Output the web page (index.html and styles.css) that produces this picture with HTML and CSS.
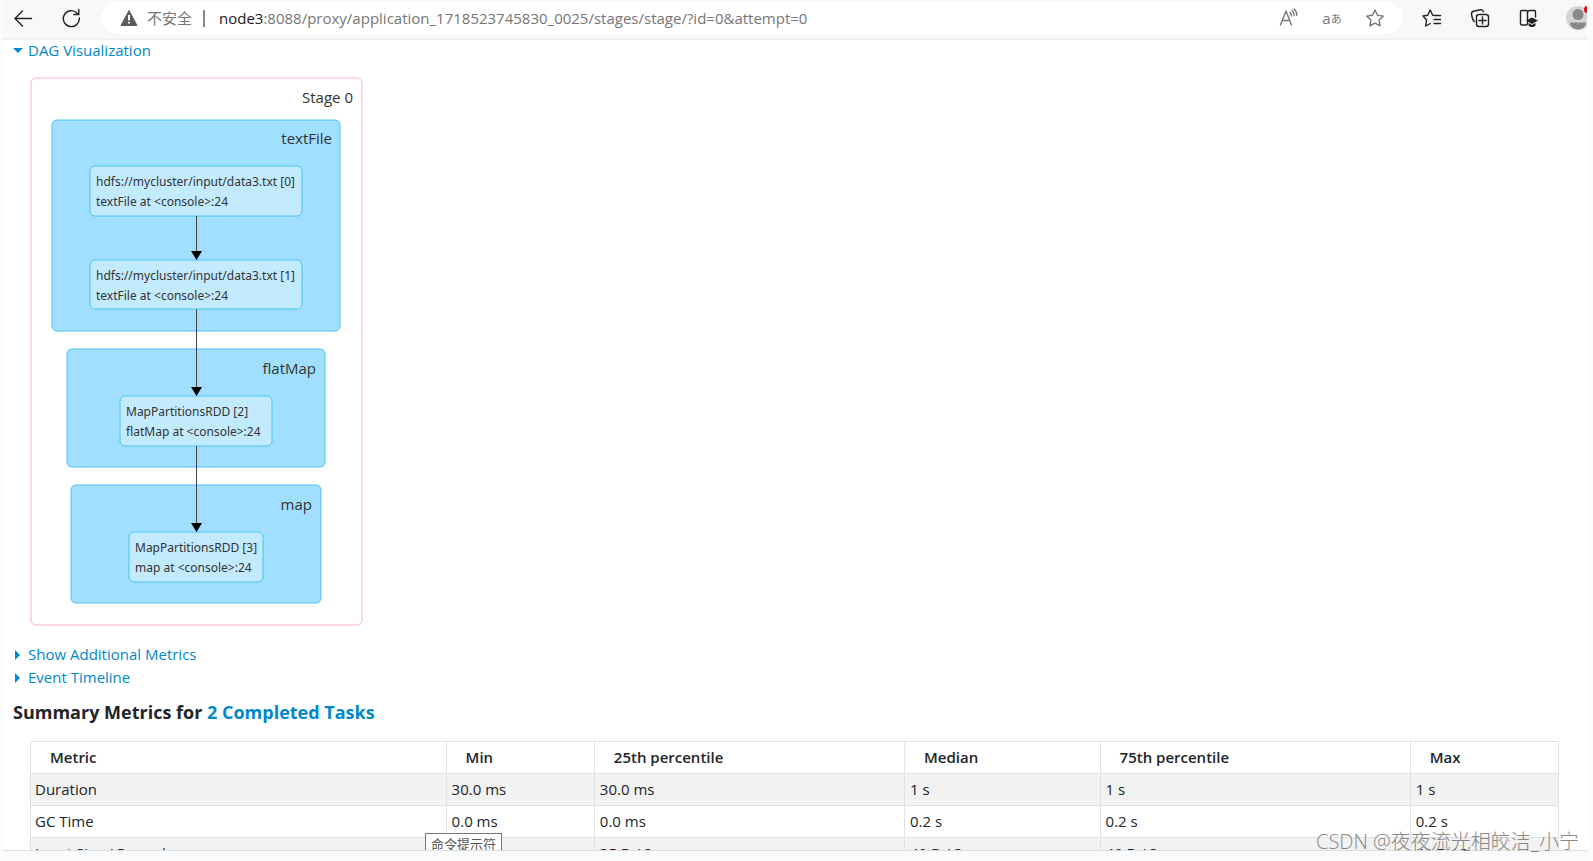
FILE: index.html
```html
<!DOCTYPE html>
<html lang="en">
<head>
  <meta charset="UTF-8" />
  <meta name="viewport" content="width=device-width, initial-scale=1" />
  <title>Details for Stage 0 (Attempt 0)</title>
  <link rel="stylesheet" href="styles.css">
</head>
<body>
  <div class="browser">

    <header class="toolbar">
      <button class="icon-btn" aria-label="Back">
        <svg width="20" height="20" viewBox="0 0 20 20"><path d="M18.500 10.500H2M9.500 3L2 10.500l7.500 7.500" /></svg>
      </button>
      <button class="icon-btn" aria-label="Refresh">
        <svg width="20" height="20" viewBox="0 0 20 20"><path d="M18.300 10a8 8 0 1 1-2.300-5L17.800 6.500M17.800 1.500v5h-5" /></svg>
      </button>

      <div class="address-bar">
        <svg class="warning" width="18" height="18" viewBox="0 0 18 18">
          <path class="solid" d="M9 1.500L17 16.500H1z" />
          <path class="mark" d="M9 6v5.500M9 13v1.500" />
        </svg>
        <span class="unsafe">不安全</span>
        <span class="divider"></span>
        <span class="url"><b>node3</b>:8088/proxy/application_1718523745830_0025/stages/stage/?id=0&amp;attempt=0</span>
        <div class="address-icons">
          <button class="icon-btn grey" aria-label="Read aloud">
            <svg width="20" height="20" viewBox="0 0 20 20"><path d="M1.500 17L7 3l5.500 14M3.500 12.500h7M11 4.500c1 .8 1.500 2 1.500 3.500M13 2.500c1.600 1.300 2.200 3 2.200 5M15 1c2 1.600 2.800 3.800 2.800 6.500" /></svg>
          </button>
          <button class="icon-btn grey translate" aria-label="Translate"><span>a</span>あ</button>
          <button class="icon-btn grey" aria-label="Add to favourites">
            <svg width="20" height="20" viewBox="0 0 20 20"><path d="M10 2l2.500 5.300 5.800.8-4.200 4 1 5.800L10 15.200 4.900 17.900l1-5.800-4.200-4 5.800-.8z" /></svg>
          </button>
        </div>
      </div>

      <div class="tools">
        <button class="icon-btn" aria-label="Favourites">
          <svg width="20" height="20" viewBox="0 0 20 20"><path d="M12.500 7.500l-1.800-.2L8.200 2 5.700 7.300 1 8l3.600 4-1 6 4.700-2.500M12.500 7.500h6M12 11.500h6.500M12 15.500h6.500" /></svg>
        </button>
        <button class="icon-btn" aria-label="Collections">
          <svg width="20" height="20" viewBox="0 0 20 20"><rect x="6.500" y="6.500" width="12" height="12" rx="2.500" /><path d="M12.500 9v7M9 12.500h7M4.500 13.500C2.800 12.500 2.500 11 2.200 9.500L1.500 6c-.2-1.500.6-2.500 2-2.800L10.500 1.700c1.500-.3 2.500.5 2.800 2" /></svg>
        </button>
        <button class="icon-btn" aria-label="Immersive reader">
          <svg width="20" height="20" viewBox="0 0 20 20"><path d="M9.500 4v11.500c0 1-.5 1.500-1.500 1.500H4c-1 0-1.500-.5-1.500-1.500V4c0-1 .5-1.500 1.500-1.500h4c1 0 1.500.5 1.500 1.500s.5-1.500 1.500-1.500h5c1 0 1.500.5 1.500 1.500v5" /><path class="solid" d="M14 9.500l6 3-6 3.500-6-3.500zM10.500 15l3.500 2 3.500-2v2.500c-1.500 2-5.500 2-7 0z" /></svg>
        </button>
        <button class="avatar" aria-label="Profile">
          <svg width="24" height="24" viewBox="0 0 24 24"><circle class="ring" cx="12" cy="12" r="12" /><circle class="person" cx="12" cy="8.500" r="5.500" /><path class="person" d="M4 16.500h16c0 4-3.500 7-8 7s-8-3-8-7z" /></svg>
          <span class="dot"></span>
        </button>
      </div>
    </header>

    <main class="page">
      <a class="toggle" href="#dag"><span class="arrow-open"></span>DAG Visualization</a>

      <svg class="dag" id="dag" width="334" height="550" viewBox="0 0 334 550">
        <rect class="stage" x="1" y="1" width="331" height="547" rx="5" />
        <text class="label" x="323" y="26">Stage 0</text>

        <rect class="cluster" x="22" y="43" width="288" height="211" rx="5" />
        <text class="label" x="302" y="67">textFile</text>
        <rect class="cluster" x="37" y="272" width="258" height="118" rx="5" />
        <text class="label" x="286" y="297">flatMap</text>
        <rect class="cluster" x="41" y="408" width="250" height="118" rx="5" />
        <text class="label" x="282" y="433">map</text>

        <rect class="node" x="60" y="89" width="212" height="50" rx="5" />
        <text class="op" x="66" y="109">hdfs://mycluster/input/data3.txt [0]</text>
        <text class="op" x="66" y="129">textFile at &lt;console&gt;:24</text>

        <rect class="node" x="60" y="183" width="212" height="49" rx="5" />
        <text class="op" x="66" y="203">hdfs://mycluster/input/data3.txt [1]</text>
        <text class="op" x="66" y="223">textFile at &lt;console&gt;:24</text>

        <rect class="node" x="90" y="319" width="152" height="50" rx="5" />
        <text class="op" x="96" y="339">MapPartitionsRDD [2]</text>
        <text class="op" x="96" y="359">flatMap at &lt;console&gt;:24</text>

        <rect class="node" x="99" y="455" width="134" height="50" rx="5" />
        <text class="op" x="105" y="475">MapPartitionsRDD [3]</text>
        <text class="op" x="105" y="495">map at &lt;console&gt;:24</text>

        <path class="edge" d="M166.500 139v38M166.500 232v81M166.500 369v80" />
        <path class="head" d="M161 174h11l-5.500 9zM161 310h11l-5.500 9zM161 446h11l-5.500 9z" />
      </svg>

      <a class="toggle" href="#metrics"><span class="arrow-closed"></span>Show Additional Metrics</a>
      <a class="toggle" href="#timeline"><span class="arrow-closed"></span>Event Timeline</a>

      <h4>Summary Metrics for <a href="#tasks">2 Completed Tasks</a></h4>

      <table class="metrics" id="metrics">
        <thead>
          <tr>
            <th class="name">Metric</th>
            <th class="min">Min</th>
            <th class="p25">25th percentile</th>
            <th class="median">Median</th>
            <th class="p75">75th percentile</th>
            <th>Max</th>
          </tr>
        </thead>
        <tbody>
          <tr><td>Duration</td><td>30.0 ms</td><td>30.0 ms</td><td>1 s</td><td>1 s</td><td>1 s</td></tr>
          <tr><td>GC Time</td><td>0.0 ms</td><td>0.0 ms</td><td>0.2 s</td><td>0.2 s</td><td>0.2 s</td></tr>
          <tr><td>Input Size / Records</td><td>35 B / 2</td><td>35 B / 2</td><td>40 B / 3</td><td>40 B / 3</td><td>40 B / 3</td></tr>
        </tbody>
      </table>
    </main>

    <div class="tooltip">命令提示符</div>
  </div>
  <div class="watermark">CSDN @夜夜流光相皎洁_小宁</div>
</body>
</html>
```
FILE: styles.css
```css
* {
  box-sizing: border-box;
}

body {
  margin: 0;
  height: 100vh;
  padding: 0 6px 10px 3px;
  background: #f9fbfd;
  color: #212529;
  font-family: "Open Sans", "Noto Sans CJK SC", sans-serif;
  font-size: 15px;
  line-height: 23px;
  overflow: hidden;
}

a {
  color: #0088cc;
  text-decoration: none;
}

.browser {
  position: relative;
  height: 100%;
  background: #fff;
  border-bottom: 1px solid #dcdee0;
  overflow: hidden;
}

/* browser toolbar */
.toolbar {
  display: flex;
  align-items: center;
  height: 40px;
  padding: 0 0 2px 10px;
  background: #f8f8f8;
  border-bottom: 2px solid #f0f0f0;
}

.icon-btn {
  display: flex;
  align-items: center;
  justify-content: center;
  width: 20px;
  height: 20px;
  padding: 0;
  border: none;
  background: none;
  color: #222;
}

.icon-btn svg {
  fill: none;
  stroke: currentColor;
  stroke-width: 1.4;
  stroke-linejoin: round;
  stroke-linecap: round;
}

.icon-btn .solid {
  fill: currentColor;
  stroke: none;
}

.icon-btn + .icon-btn {
  margin-left: 28px;
}

.icon-btn.grey {
  color: #767676;
}

.address-bar {
  display: flex;
  flex: 1;
  align-items: center;
  height: 32px;
  margin-left: 20px;
  padding: 0 17px 0 19px;
  border-radius: 16px;
  background: #fff;
  color: #767676;
  white-space: nowrap;
}

.warning .solid {
  fill: #5c5c5c;
  stroke: #5c5c5c;
  stroke-linejoin: round;
}

.warning .mark {
  stroke: #fff;
  stroke-width: 2;
}

.unsafe {
  margin-left: 9px;
}

.divider {
  width: 2px;
  height: 17px;
  margin: 0 14px 0 11px;
  background: #8a8a8a;
}

.url b {
  color: #1b1b1b;
  font-weight: 400;
}

.address-icons {
  display: flex;
  margin-left: auto;
}

.address-icons .icon-btn + .icon-btn {
  margin-left: 23px;
}

.translate {
  font-family: "Open Sans", "Noto Sans CJK JP", sans-serif;
  font-size: 11px;
}

.translate span {
  font-size: 15px;
}

.tools {
  display: flex;
  align-items: center;
  padding-left: 20px;
}

.avatar {
  position: relative;
  width: 24px;
  height: 24px;
  margin: 0 -3px 0 28px;
  padding: 0;
  border: none;
  background: none;
}

.ring {
  fill: #d6d4d2;
}

.person {
  fill: #8a8886;
}

.dot {
  position: absolute;
  top: 0;
  right: -1px;
  width: 7px;
  height: 7px;
  border-radius: 50%;
  background: #e00b1c;
}

/* stage page */
.page {
  padding: 0 28px 0 10px;
}

.toggle {
  display: flex;
  align-items: center;
}

.toggle:first-child {
  line-height: 20px;
}

.arrow-open,
.arrow-closed {
  width: 10px;
  margin-right: 5px;
  border: 5px solid transparent;
}

.arrow-open {
  height: 5px;
  border-top-color: #0088cc;
  border-bottom: 0;
}

.arrow-closed {
  margin-left: 2px;
  margin-right: 8px;
  width: 5px;
  border-left-color: #0088cc;
  border-right: 0;
}

.dag {
  display: block;
  margin: 17px 0 16px 17px;
}

.stage {
  fill: #fff;
  stroke: #f9b4c0;
}

.cluster {
  fill: #a0dfff;
  stroke: #4bc2f0;
}

.node {
  fill: #c3ebff;
  stroke: #4bc2f0;
}

.label,
.op {
  fill: #333;
}

.label {
  font-size: 15px;
  text-anchor: end;
}

.op {
  font-family: "Noto Sans", sans-serif;
  font-size: 12px;
}

.edge {
  stroke: #444;
}

h4 {
  margin: 11px 0 17px;
  font-size: 18px;
  font-weight: 700;
  line-height: 24px;
}

.metrics {
  width: calc(100% - 17px);
  margin-left: 17px;
  border-collapse: collapse;
  table-layout: fixed;
}

.metrics th,
.metrics td {
  height: 32px;
  padding: 0 5px;
  border: 1px solid #e0e2e4;
  text-align: left;
}

.metrics th {
  padding-left: 19px;
  font-weight: 600;
}

.metrics td:first-child {
  padding-left: 4px;
}

.metrics tbody tr:nth-child(odd) {
  background: #f2f2f2;
}

.name {
  width: 27.2%;
}

.min {
  width: 9.7%;
}

.p25,
.p75 {
  width: 20.3%;
}

.median {
  width: 12.8%;
}

.tooltip {
  position: absolute;
  left: 422px;
  bottom: -5px;
  padding: 0 5px;
  border: 1px solid #767676;
  background: #fff;
  color: #575757;
  font-size: 13px;
  line-height: 20px;
}

.watermark {
  position: absolute;
  right: 14px;
  bottom: 8px;
  color: #888;
  font-size: 20px;
  font-weight: 300;
}
```
